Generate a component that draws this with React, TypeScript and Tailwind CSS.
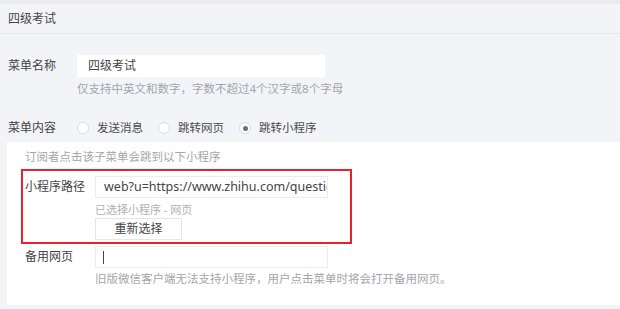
import React from 'react'

const font = { fontFamily: '"Noto Sans", "Noto Sans CJK SC", sans-serif' }

function Radio({ checked, label }: { checked?: boolean; label: string }) {
  return (
    <label className="flex items-center gap-[8px]">
      <span className="flex h-[12px] w-[12px] items-center justify-center rounded-full border border-[#dcdce0] bg-white">
        {checked && <span className="h-[5px] w-[5px] rounded-full bg-[#707070]" />}
      </span>
      <span className="text-[11.5px] text-[#4a4a4a]">{label}</span>
    </label>
  )
}

export default function App() {
  return (
    <div className="h-[309px] w-[620px] overflow-hidden border-t-[4px] border-[#ebebef] bg-[#f3f4f8] text-[#444]" style={font}>
      {/* title */}
      <div className="flex h-[30px] items-center border-b border-[#e6e7ec] pl-[8px] text-[12px]">四级考试</div>

      {/* menu name */}
      <div className="mt-[21px] flex items-center">
        <div className="w-[77px] pl-[8px] text-[12px]">菜单名称</div>
        <div className="flex h-[22px] w-[248px] items-center bg-white pl-[11px] text-[12px]">四级考试</div>
      </div>
      <div className="mt-[3px] pl-[77px] text-[11.5px] leading-[18px] text-[#a5a5a9]">
        仅支持中英文和数字，字数不超过4个汉字或8个字母
      </div>

      {/* menu content */}
      <div className="mt-[21px] flex items-center">
        <div className="w-[77px] pl-[8px] text-[12px]">菜单内容</div>
        <div className="flex items-center gap-[15px]">
          <Radio label="发送消息" />
          <Radio label="跳转网页" />
          <Radio checked label="跳转小程序" />
        </div>
      </div>

      {/* mini program panel */}
      <div className="ml-[7px] mt-[5px] h-[163px] bg-white pt-[6px]">
        <div className="pl-[18px] text-[11.5px] leading-[18px] text-[#a5a5a9]">订阅者点击该子菜单会跳到以下小程序</div>

        <div className="ml-[14px] mt-[3px] w-[331px] border-2 border-[#e8222b] pb-[2px] pt-[5px]">
          <div className="flex items-center">
            <div className="w-[72px] pl-[2px] text-[12px]">小程序路径</div>
            <div className="flex h-[22px] w-[233px] items-center overflow-hidden whitespace-nowrap border border-[#ececef] pl-[8px] text-[12.5px] text-[#444]">
              web?u=https://www.zhihu.com/questio
            </div>
          </div>
          <div className="ml-[72px] mt-[4px] text-[11px] leading-[16px] text-[#b0b0b4]">已选择小程序 - 网页</div>
          <button className="ml-[72px] flex h-[22px] w-[87px] items-center justify-center border border-[#e6e6ea] bg-white text-[12px] text-[#444]">
            重新选择
          </button>
        </div>

        <div className="mt-[2px] flex items-center">
          <div className="w-[88px] pl-[18px] text-[12px]">备用网页</div>
          <div className="flex h-[22px] w-[233px] items-center border border-[#ececef] pl-[7px]">
            <span className="h-[13px] w-px bg-[#444]" />
          </div>
        </div>
        <div className="mt-[2px] pl-[88px] text-[11.5px] leading-[18px] text-[#a5a5a9]">
          旧版微信客户端无法支持小程序，用户点击菜单时将会打开备用网页。
        </div>
      </div>
    </div>
  )
}
